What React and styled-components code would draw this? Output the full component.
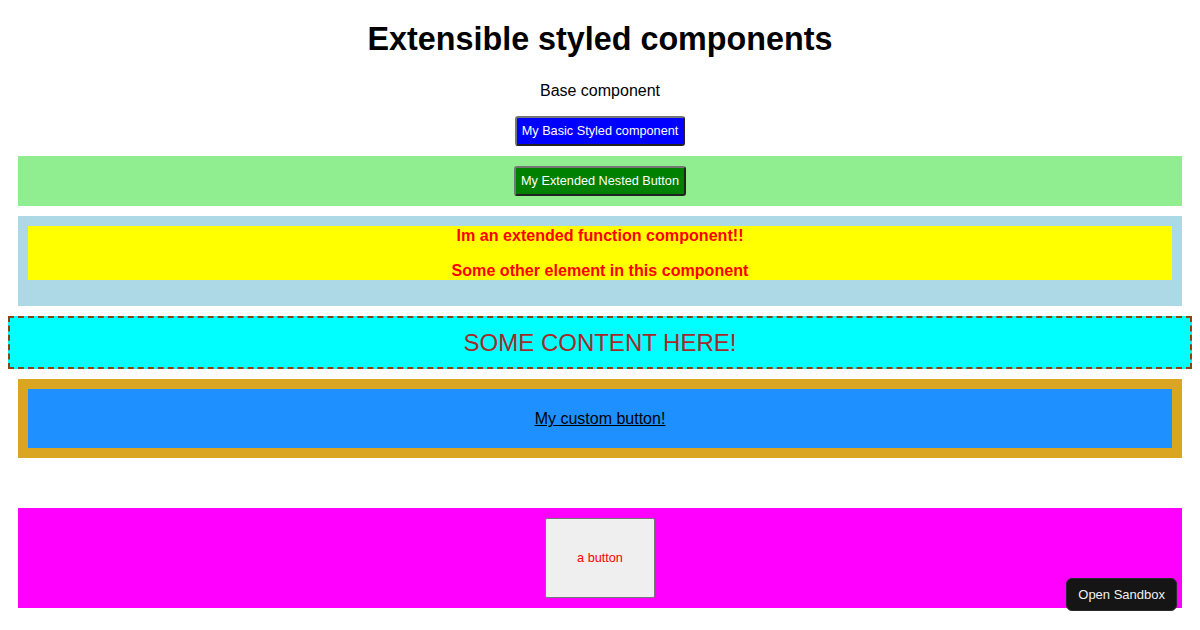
import React from "react";
import styled, { createGlobalStyle } from "styled-components";

const Global = createGlobalStyle`
  body {
    margin: 8px;
    font-family: "Liberation Sans", Arial, sans-serif;
    background: #fff;
    color: #000;
  }
`;

const Page = styled.div`
  text-align: center;
`;

const Title = styled.h1`
  font-size: 32.3px;
  font-weight: bold;
  margin: 13.44px 0 23.44px;
`;

const Label = styled.div`
  font-size: 16px;
  line-height: 18.4px;
`;

const Row = styled.div`
  display: flex;
  justify-content: center;
  margin: ${(p) => p.$margin || "0"};
`;

const BasicButton = styled.button`
  font-family: "Liberation Sans", Arial, sans-serif;
  font-size: 12.7px;
  line-height: 16px;
  padding: 5px 5px;
  border: 2px outset #767676;
  border-radius: 3px;
  background: ${(p) => p.$bg || "blue"};
  color: white;
  cursor: pointer;
`;

const Section = styled.div`
  background: ${(p) => p.$bg};
  padding: ${(p) => p.$pad || "10px"};
  margin: ${(p) => p.$margin || "10px"};
  display: flow-root;
`;

const YellowBox = styled.div`
  background: yellow;
  color: red;
  font-weight: bold;
  font-size: 16.1px;
  line-height: 19px;
`;

const Para = styled.p`
  margin: 16px 0;
`;

const ContentBox = styled.div`
  background: cyan;
  border: 2px dashed saddlebrown;
  margin: 10px 0;
  padding: 10px;
  font-size: 24px;
  line-height: 29px;
  color: brown;
`;

const CustomLink = styled.a`
  display: block;
  background: dodgerblue;
  color: black;
  text-decoration: underline;
  font-size: 16px;
  line-height: 19px;
  padding: 20px;
  cursor: pointer;
`;

const PlainButton = styled.button`
  width: 110px;
  height: 80px;
  background: #efefef;
  color: red;
  border: 1px solid #767676;
  border-radius: 2px;
  font-family: "Liberation Sans", Arial, sans-serif;
  font-size: 12.7px;
`;

const SandboxButton = styled.button`
  position: fixed;
  right: 23px;
  bottom: 19px;
  height: 33px;
  padding: 0 11px;
  background: #151515;
  color: #f0f0f0;
  border: 1px solid #2a2a2a;
  border-radius: 6px;
  font-family: "Liberation Sans", Arial, sans-serif;
  font-size: 13px;
`;

export default function App() {
  return (
    <Page>
      <Global />
      <Title>Extensible styled components</Title>
      <Label>Base component</Label>
      <Row $margin="16px 0 10px">
        <BasicButton>My Basic Styled component</BasicButton>
      </Row>
      <Section $bg="lightgreen">
        <Row>
          <BasicButton $bg="green">My Extended Nested Button</BasicButton>
        </Row>
      </Section>
      <Section $bg="lightblue">
        <YellowBox>
          <div>Im an extended function component!!</div>
          <Para>Some other element in this component</Para>
        </YellowBox>
      </Section>
      <ContentBox>SOME CONTENT HERE!</ContentBox>
      <Section $bg="goldenrod">
        <CustomLink>My custom button!</CustomLink>
      </Section>
      <Section $bg="magenta" $margin="50px 10px 10px">
        <Row>
          <PlainButton>a button</PlainButton>
        </Row>
      </Section>
      <SandboxButton>Open Sandbox</SandboxButton>
    </Page>
  );
}
